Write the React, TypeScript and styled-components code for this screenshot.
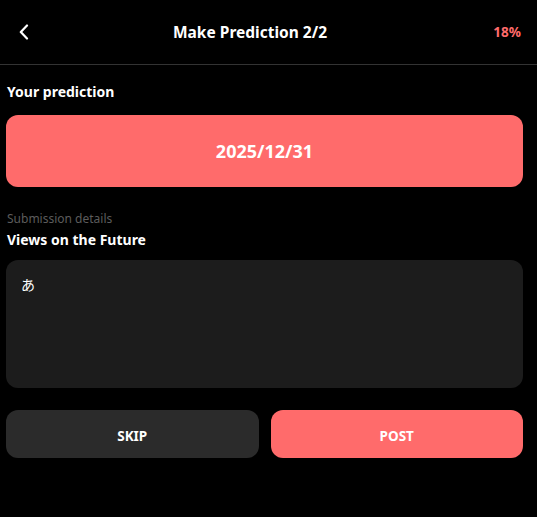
import styled, { createGlobalStyle } from "styled-components";

const GlobalStyle = createGlobalStyle`
  html, body {
    margin: 0;
    padding: 0;
    background: #000;
  }
  body {
    font-family: "Noto Sans", "Open Sans", "Noto Sans CJK JP", sans-serif;
    color: #fff;
  }
`;

export default function App() {
  return (
    <Page>
      <GlobalStyle />
      <Header>
        <BackButton aria-label="back">
          <svg width="12" height="16" viewBox="0 0 12 16" fill="none">
            <path
              d="M9 1.5L2.8 8l6.2 6.5"
              stroke="#fff"
              strokeWidth="2.2"
              strokeLinecap="round"
              strokeLinejoin="round"
            />
          </svg>
        </BackButton>
        <Title>Make Prediction 2/2</Title>
        <Progress>18%</Progress>
      </Header>
      <Content>
        <Label>Your prediction</Label>
        <PredictionBox>2025/12/31</PredictionBox>
        <Details>
          <SubLabel>Submission details</SubLabel>
          <Label>Views on the Future</Label>
        </Details>
        <Views defaultValue="あ" />
        <Actions>
          <ActionButton>SKIP</ActionButton>
          <ActionButton $primary>POST</ActionButton>
        </Actions>
      </Content>
    </Page>
  );
}

const Page = styled.div`
  min-height: 100vh;
  background: #000;
`;

const Header = styled.header`
  height: 64px;
  display: flex;
  align-items: center;
  justify-content: space-between;
  border-bottom: 1px solid #333;
  padding: 0 6px;
`;

const BackButton = styled.button`
  width: 40px;
  height: 40px;
  display: flex;
  align-items: center;
  padding: 0 0 0 12px;
  background: none;
  border: none;
  cursor: pointer;
`;

const Title = styled.h1`
  margin: 0;
  font-size: 15.5px;
  font-weight: 700;
`;

const Progress = styled.span`
  width: 77px;
  text-align: right;
  padding-right: 10px;
  box-sizing: border-box;
  font-size: 13.5px;
  font-weight: 700;
  color: #ff6b6b;
`;

const Content = styled.main`
  display: flex;
  flex-direction: column;
  padding: 17px 14px 0 6px;
`;

const Label = styled.div`
  font-size: 14px;
  font-weight: 700;
  padding-left: 1px;
`;

const PredictionBox = styled.div`
  margin-top: 14px;
  height: 72px;
  border-radius: 12px;
  background: #ff6b6b;
  display: flex;
  align-items: center;
  justify-content: center;
  font-size: 18px;
  font-weight: 700;
`;

const Details = styled.div`
  margin-top: 23px;
  display: flex;
  flex-direction: column;
  gap: 3px;
`;

const SubLabel = styled.div`
  font-size: 12px;
  color: #5c5c5c;
  padding-left: 1px;
`;

const Views = styled.textarea`
  margin-top: 11px;
  height: 128px;
  box-sizing: border-box;
  resize: none;
  border: none;
  outline: none;
  border-radius: 12px;
  background: #1c1c1c;
  color: #fff;
  padding: 14px 15px;
  font-family: "Noto Sans", "Noto Sans CJK JP", sans-serif;
  font-size: 14px;
`;

const Actions = styled.div`
  margin-top: 22px;
  display: grid;
  grid-template-columns: 1fr 1fr;
  gap: 12px;
`;

const ActionButton = styled.button<{ $primary?: boolean }>`
  height: 48px;
  padding: 3px 0 0;
  border: none;
  border-radius: 12px;
  background: ${(p) => (p.$primary ? "#ff6b6b" : "#2b2b2b")};
  color: #fff;
  font-family: "Noto Sans", sans-serif;
  font-size: 13.5px;
  font-weight: 700;
  cursor: pointer;
`;
